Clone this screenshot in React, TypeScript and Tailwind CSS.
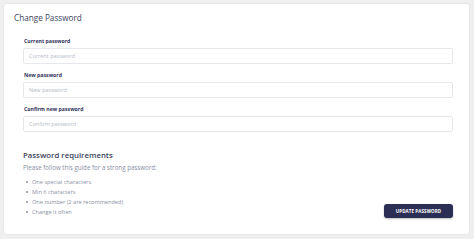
export default function App() {
  const fields = [
    { label: "Current password", placeholder: "Current password" },
    { label: "New password", placeholder: "New password" },
    { label: "Confirm new password", placeholder: "Confirm password" },
  ];
  const rules = [
    "One special characters",
    "Min 6 characters",
    "One number (2 are recommended)",
    "Change it often",
  ];

  return (
    <div
      className="h-[239px] bg-[#efefef] pt-[4px] pl-[4px] pr-[5px] pb-[5px]"
      style={{ fontFamily: '"Open Sans", "Noto Sans", sans-serif' }}
    >
      <div className="h-full bg-white rounded-[3px] shadow-[0_0_3px_rgba(0,0,0,0.08)]">
        {/* header */}
        <div className="pt-[8px] pl-[10px]">
          <h2 className="text-[8.2px] leading-[12px] text-[#3b3f5c]">Change Password</h2>
        </div>

        {/* form */}
        <div className="pl-[19px] pr-[16px] pt-[14px]">
          {fields.map((f, i) => (
            <div key={f.label} className={i > 0 ? "mt-[8px]" : ""}>
              <label className="block pl-[1px] text-[5.2px] leading-[7px] font-bold text-[#32325d]">
                {f.label}
              </label>
              <input
                type="password"
                placeholder={f.placeholder}
                className="mt-[3px] block w-full h-[16px] rounded-[2px] border border-[#e6e8eb] bg-white px-[5px] text-[5.5px] text-[#525f7f] placeholder:text-[#b3bac5] outline-none"
              />
            </div>
          ))}

          {/* requirements */}
          <div className="mt-[18px] flex items-end justify-between">
            <div>
              <h3 className="text-[7.8px] leading-[11px] font-semibold text-[#3b3f5c]">
                Password requirements
              </h3>
              <p className="mt-[3px] text-[6.2px] leading-[8px] text-[#8a8fa3]">
                Please follow this guide for a strong password:
              </p>
              <ul className="mt-[5px] pl-[3px]">
                {rules.map((r) => (
                  <li
                    key={r}
                    className="flex items-center gap-[4px] text-[5.6px] leading-[10px] text-[#8a8fa3]"
                  >
                    <span className="w-[2px] h-[2px] rounded-full bg-[#8a8fa3]" />
                    {r}
                  </li>
                ))}
              </ul>
            </div>
            <button className="mb-[-1px] w-[69px] h-[14px] rounded-[3px] bg-[#2b2e55] text-white text-[4.5px] font-bold tracking-[0.1px] uppercase shadow-[0_1px_2px_rgba(0,0,0,0.25)]">
              Update password
            </button>
          </div>
        </div>
      </div>
    </div>
  );
}
